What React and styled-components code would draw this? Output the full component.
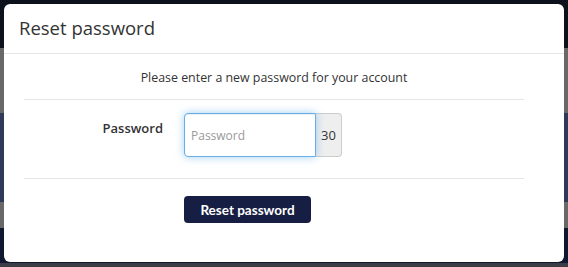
import React from "react";
import styled, { createGlobalStyle } from "styled-components";

const Global = createGlobalStyle`
  html, body { margin: 0; padding: 0; }
  body {
    width: 568px;
    height: 267px;
    overflow: hidden;
    font-family: "Open Sans", "Liberation Sans", sans-serif;
    color: #333;
  }
  * { box-sizing: border-box; }
`;

const Page = styled.div`
  position: relative;
  width: 568px;
  height: 267px;
  overflow: hidden;
`;

const Backdrop = styled.div`
  display: flex;
  flex-direction: column;
  height: 100%;
`;

const Stripe = styled.div`
  height: ${(p) => p.$h}px;
  background: ${(p) => p.$c};
  flex-shrink: 0;
`;

const Modal = styled.div`
  position: absolute;
  left: 4px;
  top: 4px;
  width: 560px;
  height: 258px;
  background: #fff;
  border-radius: 6px;
  display: flex;
  flex-direction: column;
`;

const Header = styled.div`
  padding: 12px 15px 13px;
  border-bottom: 1px solid #e5e5e5;
`;

const Title = styled.h4`
  margin: 0;
  font-size: 18.5px;
  line-height: 24px;
  font-weight: 500;
  color: #333;
`;

const Body = styled.div`
  padding: 15px 40px 0 20px;
  display: flex;
  flex-direction: column;
`;

const Intro = styled.p`
  margin: 0;
  font-size: 12.4px;
  line-height: 18px;
  text-align: center;
  color: #333;
`;

const Rule = styled.hr`
  border: 0;
  border-top: 1px solid #e5e5e5;
  margin: ${(p) => p.$top}px 0 ${(p) => p.$bottom}px;
  height: 0;
`;

const FormRow = styled.div`
  display: grid;
  grid-template-columns: 139px auto;
  column-gap: 21px;
  align-items: start;
`;

const Label = styled.label`
  font-size: 13px;
  line-height: 18px;
  font-weight: 600;
  text-align: right;
  padding-top: 6px;
  color: #333;
`;

const InputGroup = styled.div`
  display: flex;
  height: 44px;
`;

const Input = styled.input`
  width: 132px;
  height: 44px;
  border: 1px solid #66afe9;
  border-radius: 4px 0 0 4px;
  padding: 0 6px;
  font-family: "Open Sans", "Liberation Sans", sans-serif;
  font-size: 12px;
  color: #555;
  outline: none;
  box-shadow: inset 0 1px 1px rgba(0, 0, 0, 0.075), 0 0 8px rgba(102, 175, 233, 0.6);
  position: relative;
  z-index: 1;
  &::placeholder { color: #999; }
`;

const Addon = styled.span`
  display: flex;
  align-items: center;
  padding: 0 3px 0 5px;
  width: 26px;
  background: #eee;
  border: 1px solid #ccc;
  border-left: 0;
  border-radius: 0 4px 4px 0;
  font-size: 13px;
  color: #333;
`;

const Actions = styled.div`
  padding-left: 160px;
`;

const Button = styled.button`
  width: 127px;
  height: 27px;
  background: #161e43;
  border: 0;
  border-radius: 4px;
  color: #fff;
  font-family: Lato, "Open Sans", sans-serif;
  font-weight: 700;
  font-size: 13.5px;
  padding: 0;
  cursor: pointer;
`;

export default function App() {
  return (
    <Page>
      <Global />
      <Backdrop>
        <Stripe $h={48} $c="#0d111c" />
        <Stripe $h={65} $c="#686868" />
        <Stripe $h={89} $c="#2f3a58" />
        <Stripe $h={26} $c="#686868" />
        <Stripe $h={35} $c="#0f1830" />
        <Stripe $h={4} $c="#3a3d45" />
      </Backdrop>
      <Modal>
        <Header>
          <Title>Reset password</Title>
        </Header>
        <Body>
          <Intro>Please enter a new password for your account</Intro>
          <Rule $top={12} $bottom={13} />
          <FormRow>
            <Label htmlFor="pw">Password</Label>
            <InputGroup>
              <Input id="pw" type="password" placeholder="Password" autoFocus />
              <Addon>30</Addon>
            </InputGroup>
          </FormRow>
          <Rule $top={21} $bottom={17} />
          <Actions>
            <Button type="button">Reset password</Button>
          </Actions>
        </Body>
      </Modal>
    </Page>
  );
}
